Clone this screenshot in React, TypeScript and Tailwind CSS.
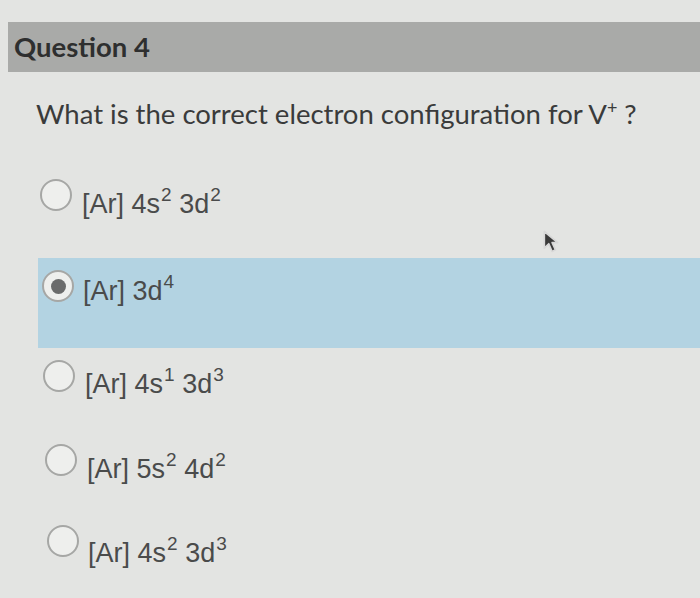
import React from "react";

function Radio({ checked }: { checked?: boolean }) {
  return (
    <div className="w-[32px] h-[32px] rounded-full border-2 border-[#a6a7a5] bg-[#eeefed] flex items-center justify-center shrink-0">
      {checked && <div className="w-[15px] h-[15px] rounded-full bg-[#6a6b6b]" />}
    </div>
  );
}

function Opt({ a, b, c, d, cls }: { a: string; b: string; c?: string; d?: string; cls: string }) {
  return (
    <span
      className={"text-[27px] leading-[30px] text-[#4a4b4b] whitespace-nowrap " + cls}
      style={{ fontFamily: '"Liberation Sans", Arial, sans-serif' }}
    >
      [Ar] {a}
      <sup className="text-[19px] relative top-[-12px] ml-[1px]">{b}</sup>
      {c && (
        <>
          {" "}
          {c}
          <sup className="text-[19px] relative top-[-12px] ml-[1px]">{d}</sup>
        </>
      )}
    </span>
  );
}

export default function App() {
  return (
    <div
      className="w-[700px] h-[598px] bg-[#e3e4e2] overflow-hidden relative flex flex-col"
      style={{ fontFamily: 'Lato, "Open Sans", sans-serif' }}
    >
      <div className="mt-[22px] ml-[8px] h-[50px] bg-[#a9aaa8] flex items-center pl-[6px] shrink-0">
        <span className="text-[27.5px] font-bold text-[#2e2f2f]">Question 4</span>
      </div>
      <div className="mt-[26px] ml-[36px] h-[32px] text-[27.5px] leading-[32px] text-[#3a3b3b] whitespace-nowrap shrink-0">
        What is the correct electron configuration for V
        <sup className="text-[18px] relative top-[-10px]">+</sup> ?
      </div>
      <div className="mt-[49px] ml-[40px] h-[32px] flex items-start gap-[10px] shrink-0">
        <Radio />
        <Opt a="4s" b="2" c="3d" d="2" cls="mt-[10px]" />
      </div>
      <div className="mt-[47px] ml-[38px] h-[90px] bg-[#b3d3e2] flex items-start pt-[12px] pl-[4px] gap-[9px] shrink-0">
        <Radio checked />
        <Opt a="3d" b="4" cls="mt-[6px]" />
      </div>
      <div className="mt-[12px] ml-[43px] h-[32px] flex items-start gap-[10px] shrink-0">
        <Radio />
        <Opt a="4s" b="1" c="3d" d="3" cls="mt-[9px]" />
      </div>
      <div className="mt-[52px] ml-[45px] h-[32px] flex items-start gap-[10px] shrink-0">
        <Radio />
        <Opt a="5s" b="2" c="4d" d="2" cls="mt-[10px]" />
      </div>
      <div className="mt-[49px] ml-[47px] h-[32px] flex items-start gap-[9px] shrink-0">
        <Radio />
        <Opt a="4s" b="2" c="3d" d="3" cls="mt-[13px]" />
      </div>
      <svg className="absolute left-[541px] top-[229px]" width="20" height="25" viewBox="0 0 18 22">
        <path
          d="M3 2 L3 17 L7 13 L10 20 L13 18.5 L10 12 L15 12 Z"
          fill="#3a3a3a"
          stroke="#d8d8d8"
          strokeWidth="1.5"
          strokeLinejoin="round"
        />
      </svg>
    </div>
  );
}
